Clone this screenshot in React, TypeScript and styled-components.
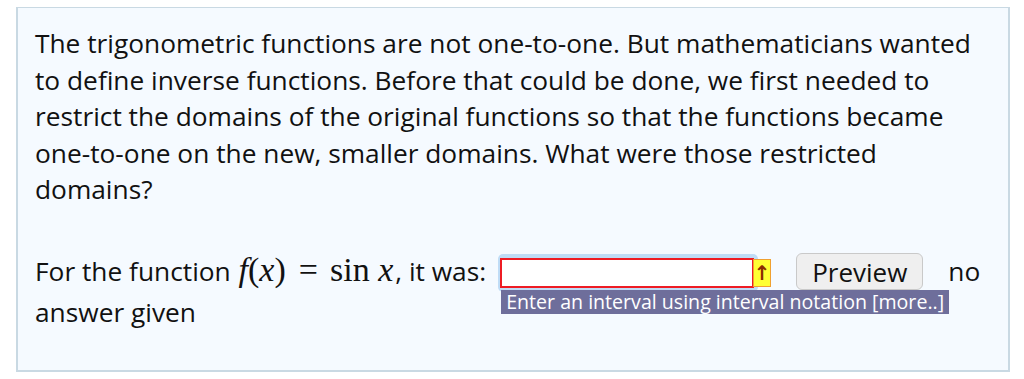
import React from "react";
import styled, { createGlobalStyle } from "styled-components";

const GlobalStyle = createGlobalStyle`
  html, body {
    margin: 0;
    padding: 0;
    background: #ffffff;
  }
  body {
    font-family: "Open Sans", "Liberation Sans", sans-serif;
    color: #111;
  }
`;

const Page = styled.div`
  padding: 7px 14px 0 16px;
`;

const ProblemBox = styled.div`
  background-color: #f5faff;
  border: 1px solid #c9d9e3;
  border-right-width: 2px;
  border-bottom-width: 2px;
  border-left-width: 2px;
  height: 365px;
  box-sizing: border-box;
  padding: 17px 18px 0 17px;
`;

const Para = styled.p`
  margin: 0;
  font-size: 26.3px;
  line-height: 36.5px;
`;

const AnswerPara = styled(Para)`
  margin-top: 43px;
  line-height: 41px;
`;

const Math = styled.span`
  font-family: "Liberation Serif", "DejaVu Serif", serif;
  font-size: 34px;
  line-height: 1;
  margin: 0 2px 0 1px;
`;

const MathVar = styled.i`
  font-style: italic;
`;

const MathOp = styled.span`
  margin: 0 12px 0 13px;
`;

const AnswerGroup = styled.span`
  position: relative;
  display: inline-flex;
  align-items: center;
  vertical-align: middle;
  margin-left: 12px;
`;

const FocusRing = styled.span`
  display: inline-flex;
  padding: 4px 4px 4px 2px;
  border-radius: 5px;
  background: #bfdcf6;
`;

const AnswerInput = styled.input`
  width: 254px;
  height: 30px;
  box-sizing: border-box;
  border: 2px solid #ee1c24;
  background: #fff;
  margin: 0;
  outline: none;
`;

const WarnIcon = styled.span`
  display: inline-flex;
  align-items: center;
  justify-content: center;
  width: 18px;
  height: 28px;
  box-sizing: border-box;
  background: #ffff33;
  border: 1px solid #f0a030;
  color: #8b2c00;
  font-family: "DejaVu Sans", sans-serif;
  font-size: 20px;
  font-weight: bold;
  line-height: 1;
  margin-left: -5px;
`;

const Tooltip = styled.span`
  position: absolute;
  left: 3px;
  top: 36px;
  background: #6e6e9b;
  color: #fff;
  font-size: 19.6px;
  line-height: 24px;
  padding: 0 5px;
  white-space: nowrap;
`;

const PreviewButton = styled.button`
  font-family: "Open Sans", "Liberation Sans", sans-serif;
  font-size: 26px;
  color: #111;
  height: 37px;
  padding: 0 15px 3px;
  margin: 0 25px 0 25px;
  vertical-align: middle;
  position: relative;
  top: -2px;
  background: #efefef;
  border: 1px solid #c9c9c9;
  border-radius: 6px;
`;

export default function App() {
  return (
    <>
      <GlobalStyle />
      <Page>
        <ProblemBox>
          <Para>
            The trigonometric functions are not one-to-one. But mathematicians
            wanted to define inverse functions. Before that could be done, we
            first needed to restrict the domains of the original functions so
            that the functions became one-to-one on the new, smaller domains.
            What were those restricted domains?
          </Para>
          <AnswerPara>
            For the function{" "}
            <Math>
              <MathVar>f</MathVar>(<MathVar>x</MathVar>)<MathOp>=</MathOp>sin{" "}
              <MathVar>x</MathVar>
            </Math>
            , it was:
            <AnswerGroup>
              <FocusRing>
                <AnswerInput type="text" />
              </FocusRing>
              <WarnIcon>↑</WarnIcon>
              <Tooltip>Enter an interval using interval notation [more..]</Tooltip>
            </AnswerGroup>
            <PreviewButton>Preview</PreviewButton>
            no answer given
          </AnswerPara>
        </ProblemBox>
      </Page>
    </>
  );
}
